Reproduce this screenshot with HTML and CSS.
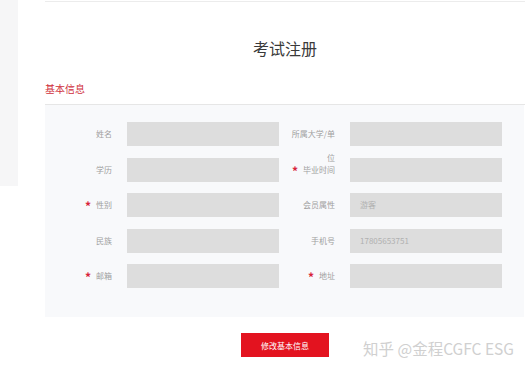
FILE: index.html
```html
<!DOCTYPE html>
<html lang="zh">
<head>
<meta charset="utf-8">
<title>考试注册</title>
<link rel="stylesheet" href="styles.css">
</head>
<body>
<div class="page">
  <aside class="sidebar"></aside>
  <main class="main">
    <h1 class="title">考试注册</h1>
    <div class="section-head">基本信息</div>
    <form class="panel">
      <div class="row">
        <div class="field"><label class="lbl">姓名</label><div class="input"></div></div>
        <div class="field"><label class="lbl">所属大学/单位</label><div class="input"></div></div>
      </div>
      <div class="row">
        <div class="field"><label class="lbl">学历</label><div class="input"></div></div>
        <div class="field"><label class="lbl"><span class="star">*</span>毕业时间</label><div class="input"></div></div>
      </div>
      <div class="row">
        <div class="field"><label class="lbl"><span class="star">*</span>性别</label><div class="input"></div></div>
        <div class="field"><label class="lbl">会员属性</label><div class="input">游客</div></div>
      </div>
      <div class="row">
        <div class="field"><label class="lbl">民族</label><div class="input"></div></div>
        <div class="field"><label class="lbl">手机号</label><div class="input">17805653751</div></div>
      </div>
      <div class="row">
        <div class="field"><label class="lbl"><span class="star">*</span>邮箱</label><div class="input"></div></div>
        <div class="field"><label class="lbl"><span class="star">*</span>地址</label><div class="input"></div></div>
      </div>
    </form>
    <div class="actions"><button class="btn" type="button">修改基本信息</button></div>
  </main>
</div>
<div class="watermark">知乎 @金程CGFC ESG</div>
</body>
</html>
```
FILE: styles.css
```css
html, body {
  margin: 0;
  padding: 0;
  background: #ffffff;
  font-family: "Noto Sans CJK SC", "Noto Sans", sans-serif;
}
.page {
  display: flex;
  align-items: flex-start;
}
.sidebar {
  width: 18px;
  height: 186px;
  background: #f6f6f7;
  flex: none;
}
.main {
  margin-left: 27px;
  width: 480px;
  margin-top: 1px;
  border-top: 1px solid #ececec;
}
.title {
  margin: 36px 0 0;
  font-size: 16px;
  line-height: 20px;
  font-weight: normal;
  color: #3a3a3a;
  text-align: center;
}
.section-head {
  margin-top: 24px;
  font-size: 10px;
  line-height: 14px;
  color: #cf2f3c;
  padding-bottom: 8px;
  border-bottom: 1px solid #e6e6e6;
}
.panel {
  margin: 0;
  background: #f8f9fb;
  padding: 17px 0 29px 19px;
  display: flex;
  flex-direction: column;
  gap: 11.5px;
  width: 460px;
}
.row {
  display: flex;
  gap: 8px;
  height: 24px;
}
.field {
  display: flex;
  align-items: flex-start;
  gap: 15px;
}
.lbl {
  width: 48px;
  height: 24px;
  line-height: 24px;
  font-size: 8px;
  color: #a0a0a0;
  text-align: right;
  flex: none;
}
.star {
  display: inline-block;
  color: #d8243a;
  font-size: 12px;
  font-weight: bold;
  line-height: 10px;
  vertical-align: -3px;
  margin-right: 5px;
}
.input {
  width: 152px;
  height: 24px;
  background: #dddddd;
  box-sizing: border-box;
  padding-left: 10px;
  font-size: 8px;
  line-height: 24px;
  color: #b0b0b0;
}
.actions {
  display: flex;
  justify-content: center;
  margin-top: 16px;
}
.btn {
  width: 88px;
  height: 24px;
  border: none;
  background: #e3131f;
  color: #ffffff;
  font-family: "Noto Sans CJK SC", "Noto Sans", sans-serif;
  font-size: 8px;
  padding: 0;
}
.watermark {
  position: absolute;
  left: 363px;
  top: 338px;
  font-size: 15.5px;
  line-height: 20px;
  color: #d0d0d0;
  font-family: "Noto Sans CJK SC", "Noto Sans", sans-serif;
  white-space: nowrap;
}
```
